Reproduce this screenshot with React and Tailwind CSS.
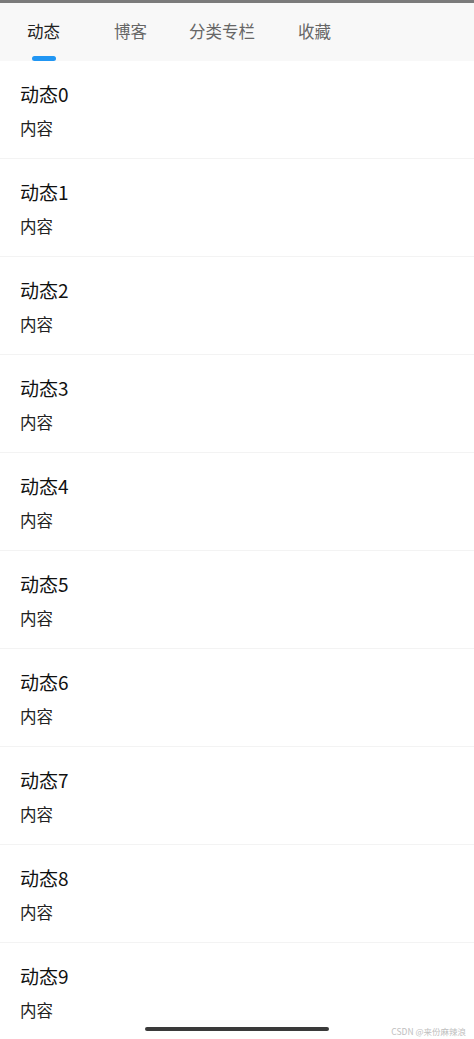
import React from "react";

const tabs = [
  { label: "动态", ml: "ml-[27px]", active: true },
  { label: "博客", ml: "ml-[54px]" },
  { label: "分类专栏", ml: "ml-[42px]" },
  { label: "收藏", ml: "ml-[43px]" },
];

export default function App() {
  const font = { fontFamily: '"Noto Sans CJK SC", "Noto Sans", sans-serif' };
  return (
    <div className="relative w-[474px] h-[1039px] overflow-hidden bg-white" style={font}>
      <div className="h-[3px] bg-[#7b7b7b]" />
      <div className="flex h-[58px] bg-[#f8f8f8]">
        {tabs.map((t) => (
          <div key={t.label} className={`relative flex items-center ${t.ml}`}>
            <span
              className={`text-[16.5px] leading-[24px] -mt-[2px] ${
                t.active ? "text-[#222]" : "text-[#666]"
              }`}
            >
              {t.label}
            </span>
            {t.active && (
              <div className="absolute bottom-0 left-1/2 -translate-x-1/2 w-[24px] h-[5px] rounded-full bg-[#2196f3]" />
            )}
          </div>
        ))}
      </div>
      <div className="flex flex-col">
        {Array.from({ length: 10 }, (_, i) => (
          <div key={i} className="h-[98px] border-b border-[#f3f3f3] px-[20px] pt-[21px] flex flex-col shrink-0">
            <div className="text-[19px] leading-[24px] text-[#111]">动态{i}</div>
            <div className="mt-[11px] text-[16.5px] leading-[22px] text-[#222]">内容</div>
          </div>
        ))}
      </div>
      <div className="absolute left-[145px] top-[1027px] w-[184px] h-[4px] rounded-full bg-[#3a3a3a]" />
      <div className="absolute right-[8px] top-[1025px] text-[8.5px] leading-[12px] text-[#c0c0c0]">
        CSDN @来份麻辣浪
      </div>
    </div>
  );
}
